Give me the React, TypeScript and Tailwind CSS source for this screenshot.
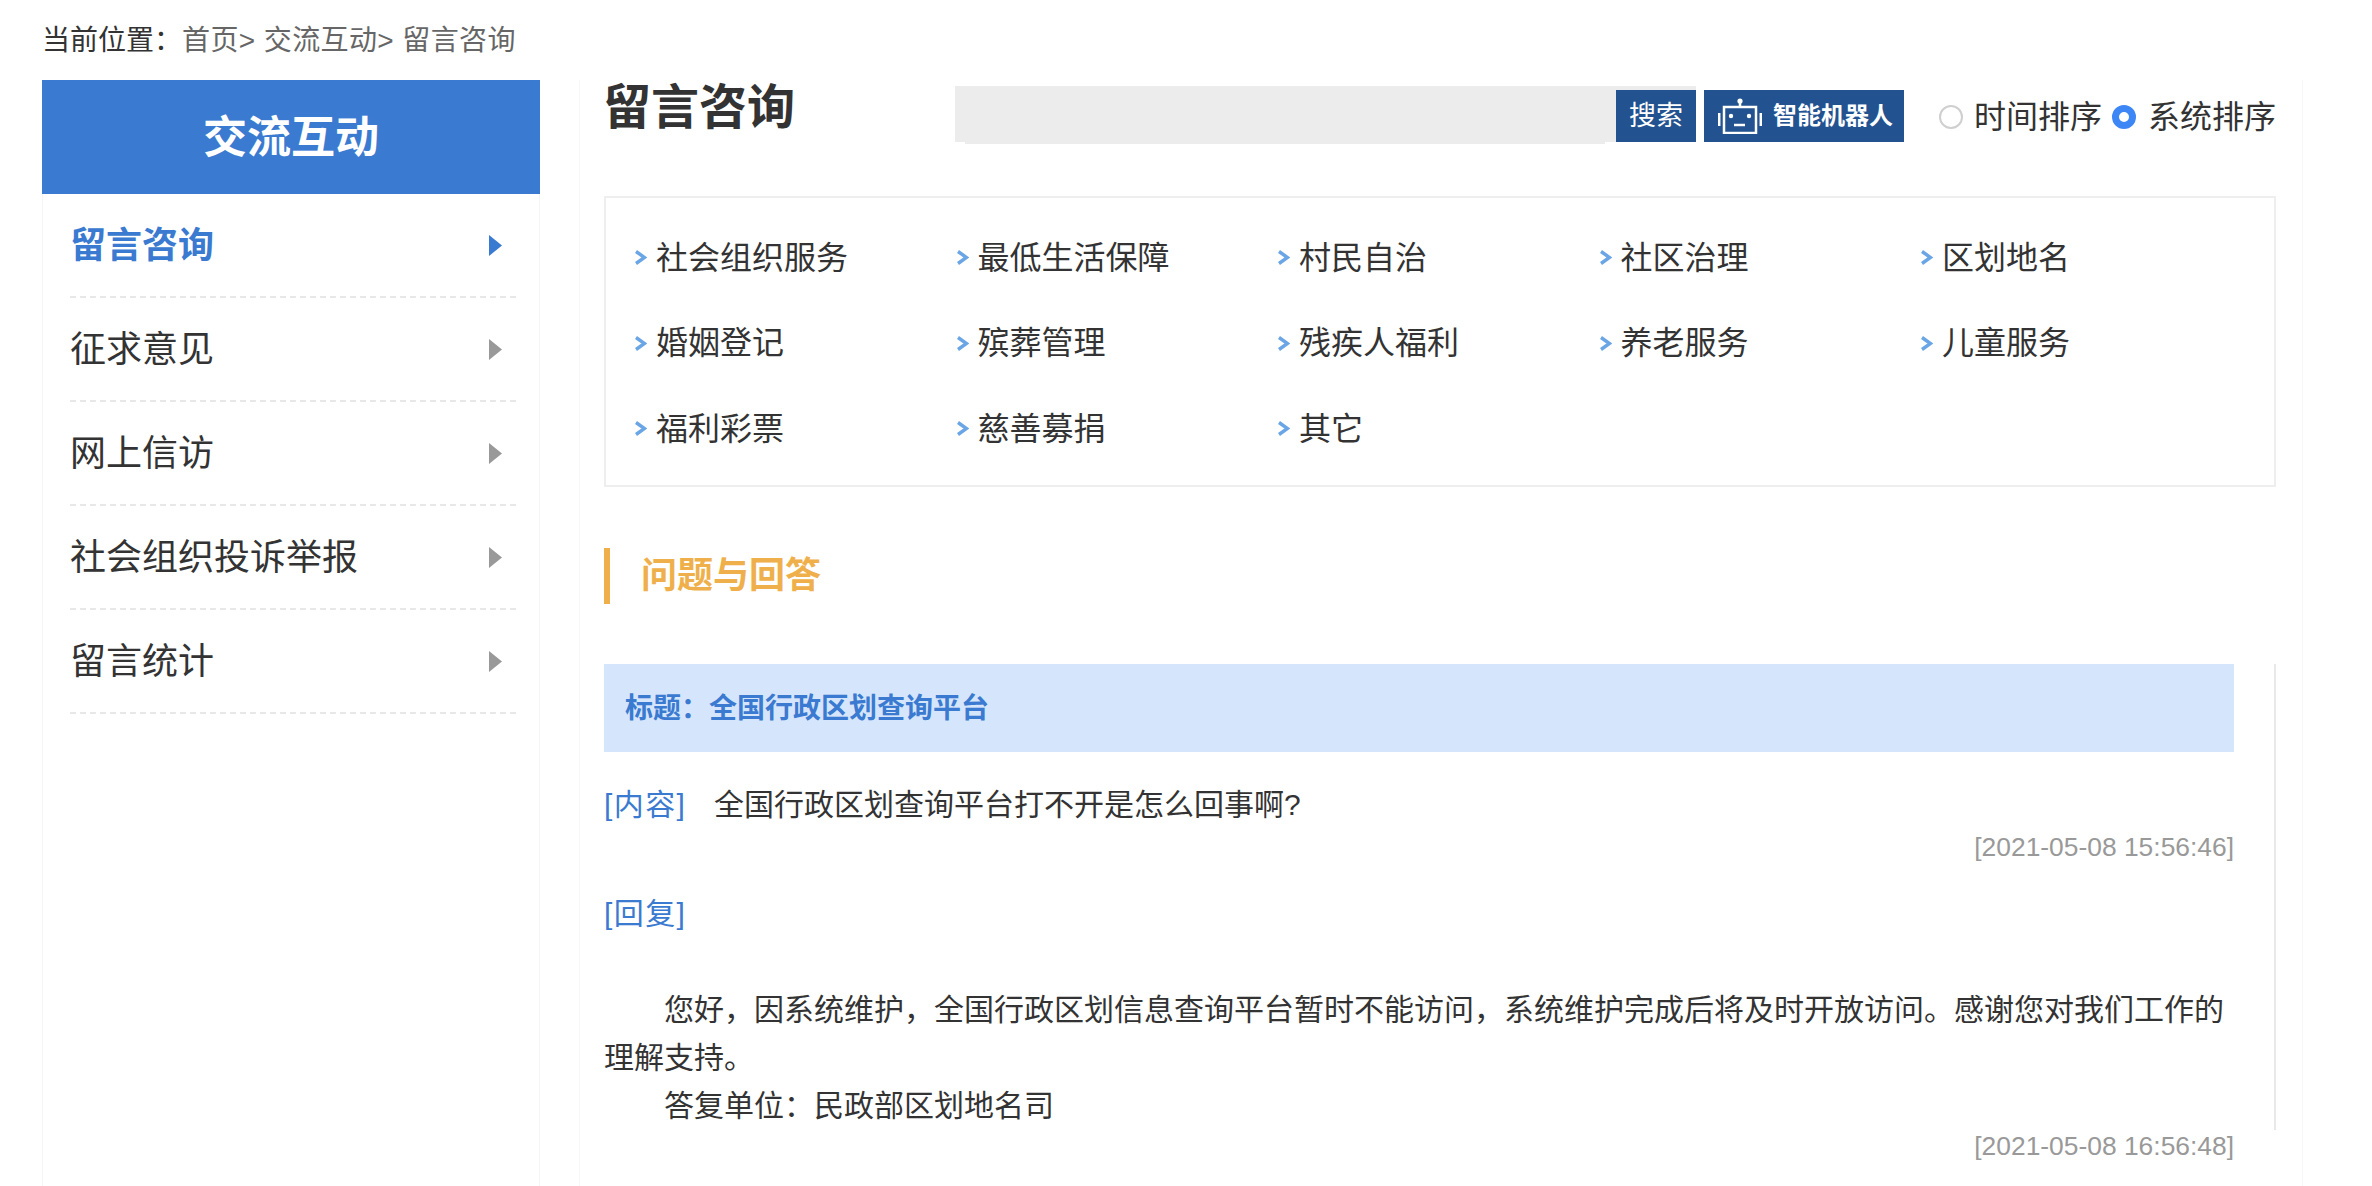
import React from 'react';

const menu = ['留言咨询', '征求意见', '网上信访', '社会组织投诉举报', '留言统计'];
const categories = [
  '社会组织服务', '最低生活保障', '村民自治', '社区治理', '区划地名',
  '婚姻登记', '殡葬管理', '残疾人福利', '养老服务', '儿童服务',
  '福利彩票', '慈善募捐', '其它',
];

const RobotIcon: React.FC = () => (
  <svg width="44" height="36" viewBox="0 0 44 36" fill="none" stroke="#fff" strokeWidth="2.5">
    <rect x="6" y="9" width="32" height="26" />
    <path d="M22 9V3" />
    <circle cx="22" cy="3" r="2.6" fill="#fff" stroke="none" />
    <path d="M1.2 15v13M42.8 15v13" />
    <circle cx="13" cy="18" r="2.2" fill="#fff" stroke="none" />
    <circle cx="31" cy="18" r="2.2" fill="#fff" stroke="none" />
    <path d="M16 27h11" />
  </svg>
);

const Chevron: React.FC = () => (
  <svg width="12" height="15" viewBox="0 0 12 15" fill="none" stroke="#6aa5e6" strokeWidth="3.4" className="shrink-0">
    <path d="M1 1.5l8.5 6-8.5 6" />
  </svg>
);

const Triangle: React.FC<{ active: boolean }> = ({ active }) => (
  <svg width="13" height="21" viewBox="0 0 13 21" fill={active ? '#3a7ad0' : '#999999'}>
    <path d="M0 0l13 10.5L0 21z" />
  </svg>
);

const App: React.FC = () => {
  return (
    <div className="h-[1186px] overflow-hidden bg-white font-['Liberation_Sans','Noto_Sans_CJK_SC',sans-serif] text-[#333]">
      <div className="h-[80px] pl-[42px] pt-[2px] flex items-center text-[28px]">
        <span>当前位置：</span>
        <span className="text-[#666] tracking-[0.4px]">首页&gt; 交流互动&gt; 留言咨询</span>
      </div>

      <div className="flex pl-[42px]">
        <aside className="w-[498px] h-[1106px] border-x border-[#f5f5f5]">
          <div className="-mx-px h-[114px] pt-[2px] bg-[#3a7ad0] text-white text-[44px] font-bold flex items-center justify-center">
            交流互动
          </div>
          <ul className="pl-[27px] pr-[23px]">
            {menu.map((item, i) => (
              <li
                key={item}
                className={`h-[104px] flex items-center justify-between pr-[14px] border-b-2 border-dashed border-[#e8e8e8] text-[36px] ${i === 0 ? 'text-[#3a7ad0] font-bold' : ''}`}
              >
                <span className="pt-[2px]">{item}</span>
                <Triangle active={i === 0} />
              </li>
            ))}
          </ul>
        </aside>

        <main className="ml-[39px] w-[1724px] h-[1106px] border-x border-[#f7f7f7] pl-[24px] pr-[26px]">
          <div className="flex h-[116px]">
            <h1 className="w-[351px] h-[54px] leading-[56px] -ml-px text-[48px] font-bold shrink-0">留言咨询</h1>
            <div className="relative w-[741px] h-[56px] mt-[6px] ml-px bg-[#ececec] shrink-0">
              <div className="absolute left-[10px] top-[56px] w-[640px] h-[2px] bg-[#ececec]" />
              <button className="absolute left-[661px] top-[4px] w-[80px] h-[52px] bg-[#22528f] text-white text-[27px]">
                搜索
              </button>
            </div>
            <button className="ml-[8px] mt-[10px] w-[200px] h-[52px] bg-[#22528f] text-white flex items-center pl-[14px] gap-[11px] text-[24px] font-bold shrink-0">
              <RobotIcon />
              <span>智能机器人</span>
            </button>
            <div className="ml-[35px] h-[74px] flex items-center text-[32px] whitespace-nowrap">
              <span className="w-[24px] h-[24px] rounded-full border-2 border-[#cfcfcf] bg-white" />
              <span className="ml-[11px]">时间排序</span>
              <span className="ml-[10px] w-[24px] h-[24px] rounded-full border-[7px] border-[#3d86f6] bg-white" />
              <span className="ml-[12px]">系统排序</span>
            </div>
          </div>

          <div className="h-[291px] border-2 border-[#eeeeee] pt-[17px] pl-[29px]">
            <div className="grid grid-cols-[repeat(5,321.5px)] auto-rows-[85.5px] text-[32px]">
              {categories.map((c) => (
                <div key={c} className="flex items-center gap-[9px]">
                  <Chevron />
                  <span>{c}</span>
                </div>
              ))}
            </div>
          </div>

          <div className="mt-[61px] h-[56px] border-l-[6px] border-[#efb04b] pl-[31px] flex items-center text-[36px] font-bold text-[#efb04b]">
            问题与回答
          </div>

          <div className="relative mt-[60px]">
            <div className="absolute right-0 top-0 w-[2px] h-[466px] bg-[#e8e8e8]" />
            <div className="w-[1630px]">
              <div className="h-[88px] pt-[1px] bg-[#d5e6fc] pl-[21px] flex items-center text-[28px] font-bold text-[#3a7ad0]">
                标题：全国行政区划查询平台
              </div>
              <div className="mt-[29px] flex text-[30px] leading-[48px]">
                <span className="w-[110px] text-[#3a7ad0] tracking-[1.4px]">[内容]</span>
                <span>全国行政区划查询平台打不开是怎么回事啊?</span>
              </div>
              <div className="text-right text-[26.4px] leading-[36px] text-[#999]">[2021-05-08 15:56:46]</div>
              <div className="mt-[25px] text-[30px] leading-[48px] text-[#3a7ad0] tracking-[1.4px]">[回复]</div>
              <div className="mt-[48px] text-[30px] leading-[48px]">
                <p className="indent-[60px]">
                  您好，因系统维护，全国行政区划信息查询平台暂时不能访问，系统维护完成后将及时开放访问。感谢您对我们工作的理解支持。
                </p>
                <p className="indent-[60px]">答复单位：民政部区划地名司</p>
              </div>
              <div className="-mt-[2px] text-right text-[26.4px] leading-[36px] text-[#999]">[2021-05-08 16:56:48]</div>
            </div>
          </div>
        </main>
      </div>
    </div>
  );
};

export default App;
